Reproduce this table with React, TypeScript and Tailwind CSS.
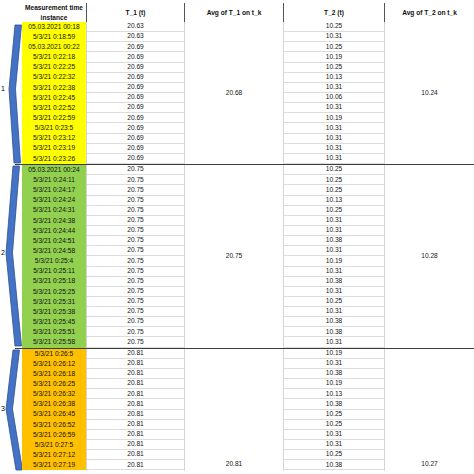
import React from 'react';

const ROW = 10.15;

type Group = {
  label: string;
  color: string;
  times: string[];
  t1: string[];
  t2: string[];
  avg1: string;
  avg2: string;
  atEnd?: boolean;
  brace: { top: [number, number]; tip: [number, number]; bottom: [number, number] };
};

const g1Times = [
  '05.03.2021 00:18', '5/3/21 0:18:59', '05.03.2021 00:22', '5/3/21 0:22:18', '5/3/21 0:22:25',
  '5/3/21 0:22:32', '5/3/21 0:22:38', '5/3/21 0:22:45', '5/3/21 0:22:52', '5/3/21 0:22:59',
  '5/3/21 0:23:5', '5/3/21 0:23:12', '5/3/21 0:23:19', '5/3/21 0:23:26',
];
const g2Times = [
  '05.03.2021 00:24', '5/3/21 0:24:11', '5/3/21 0:24:17', '5/3/21 0:24:24', '5/3/21 0:24:31',
  '5/3/21 0:24:38', '5/3/21 0:24:44', '5/3/21 0:24:51', '5/3/21 0:24:58', '5/3/21 0:25:4',
  '5/3/21 0:25:11', '5/3/21 0:25:18', '5/3/21 0:25:25', '5/3/21 0:25:31', '5/3/21 0:25:38',
  '5/3/21 0:25:45', '5/3/21 0:25:51', '5/3/21 0:25:58',
];
const g3Times = [
  '5/3/21 0:26:5', '5/3/21 0:26:12', '5/3/21 0:26:18', '5/3/21 0:26:25', '5/3/21 0:26:32',
  '5/3/21 0:26:38', '5/3/21 0:26:45', '5/3/21 0:26:52', '5/3/21 0:26:59', '5/3/21 0:27:5',
  '5/3/21 0:27:12', '5/3/21 0:27:19',
];

const groups: Group[] = [
  {
    label: '1',
    color: 'bg-[#ffff00]',
    times: g1Times,
    t1: ['20.63', '20.63', ...Array(12).fill('20.69')],
    t2: ['10.25', '10.31', '10.25', '10.19', '10.25', '10.13', '10.31', '10.06', '10.31', '10.19', '10.31', '10.31', '10.31', '10.31'],
    avg1: '20.68',
    avg2: '10.24',
    brace: { top: [15, 3], tip: [9, 67], bottom: [14, 141] },
  },
  {
    label: '2',
    color: 'bg-[#92d050]',
    times: g2Times,
    t1: Array(18).fill('20.75'),
    t2: ['10.25', '10.25', '10.25', '10.13', '10.25', '10.31', '10.31', '10.38', '10.31', '10.19', '10.31', '10.38', '10.31', '10.25', '10.31', '10.38', '10.38', '10.31'],
    avg1: '20.75',
    avg2: '10.28',
    brace: { top: [13, 1], tip: [6, 88], bottom: [15, 181] },
  },
  {
    label: '3',
    color: 'bg-[#ffc000]',
    times: g3Times,
    t1: Array(12).fill('20.81'),
    t2: ['10.19', '10.31', '10.38', '10.19', '10.13', '10.38', '10.25', '10.25', '10.31', '10.31', '10.25', '10.38'],
    avg1: '20.81',
    avg2: '10.27',
    atEnd: true,
    brace: { top: [13, 1], tip: [6, 60], bottom: [16, 121] },
  },
];

function Brace({ h, b, label }: { h: number; b: Group['brace']; label: string }) {
  const w = 6.5;
  const pts = [
    [b.top[0], b.top[1]],
    [b.top[0] + w, b.top[1]],
    [b.tip[0] + w, b.tip[1]],
    [b.bottom[0] + w, b.bottom[1]],
    [b.bottom[0], b.bottom[1]],
    [b.tip[0], b.tip[1]],
  ]
    .map((p) => p.join(','))
    .join(' ');
  return (
    <div className="relative w-[22px] shrink-0">
      <svg width={22} height={h} viewBox={`0 0 22 ${h}`} className="absolute left-0 top-0">
        <polygon points={pts} fill="#4472c4" stroke="#2f528f" strokeWidth={0.8} strokeLinejoin="miter" />
      </svg>
      <span
        className="absolute left-[1px] text-[7px] leading-none text-black"
        style={{ top: b.tip[1] - 4 }}
      >
        {label}
      </span>
    </div>
  );
}

function Cell({ children, className = '' }: { children: React.ReactNode; className?: string }) {
  return (
    <div className={`flex h-[10.15px] items-center justify-center leading-none ${className}`}>{children}</div>
  );
}

function GroupBlock({ g }: { g: Group }) {
  const h = g.times.length * ROW;
  return (
    <div className="flex" style={{ height: h }}>
      <Brace h={h} b={g.brace} label={g.label} />
      <div className="flex w-[65px] flex-col border-r border-[#d4d4d4]">
        {g.times.map((t, i) => (
          <Cell key={i} className={`${g.color} text-[#111]`}>
            {t}
          </Cell>
        ))}
      </div>
      <div className="flex w-[98px] flex-col border-r border-[#d4d4d4]">
        {g.t1.map((v, i) => (
          <Cell key={i} className="border-b border-[#dcdcdc]">
            {v}
          </Cell>
        ))}
      </div>
      <div
        className={`flex w-[99px] justify-center border-r border-[#d4d4d4] ${g.atEnd ? 'items-end pb-[2px]' : 'items-center'}`}
      >
        {g.avg1}
      </div>
      <div className="flex w-[101px] flex-col border-r border-[#d4d4d4]">
        {g.t2.map((v, i) => (
          <Cell key={i} className="border-b border-[#dcdcdc]">
            {v}
          </Cell>
        ))}
      </div>
      <div className={`flex w-[89px] justify-center ${g.atEnd ? 'items-end pb-[2px]' : 'items-center'}`}>
        {g.avg2}
      </div>
    </div>
  );
}

export default function App() {
  return (
    <div className="h-[474px] w-[474px] overflow-hidden bg-white font-['Liberation_Sans',Arial,sans-serif] text-[6.6px] text-[#161616]">
      {/* header */}
      <div className="flex h-[22px] pt-[3px] font-bold text-[#111]">
        <div className="w-[22px] shrink-0" />
        <div className="flex w-[65px] flex-col items-center justify-center border-r border-[#555] text-center leading-[9.5px]">
          <span>Measurement time</span>
          <span>instance</span>
        </div>
        <div className="flex w-[98px] items-center justify-center border-r border-[#555]">T_1 (t)</div>
        <div className="flex w-[99px] items-center justify-center border-r border-[#555]">Avg of T_1 on t_k</div>
        <div className="flex w-[101px] items-center justify-center border-r border-[#555]">T_2 (t)</div>
        <div className="flex w-[89px] items-center justify-center">Avg of T_2 on t_k</div>
      </div>

      {groups.map((g, i) => (
        <React.Fragment key={g.label}>
          {i > 0 && <div className="ml-[15px] h-px bg-[#3c3c3c]" />}
          <GroupBlock g={g} />
        </React.Fragment>
      ))}
    </div>
  );
}
